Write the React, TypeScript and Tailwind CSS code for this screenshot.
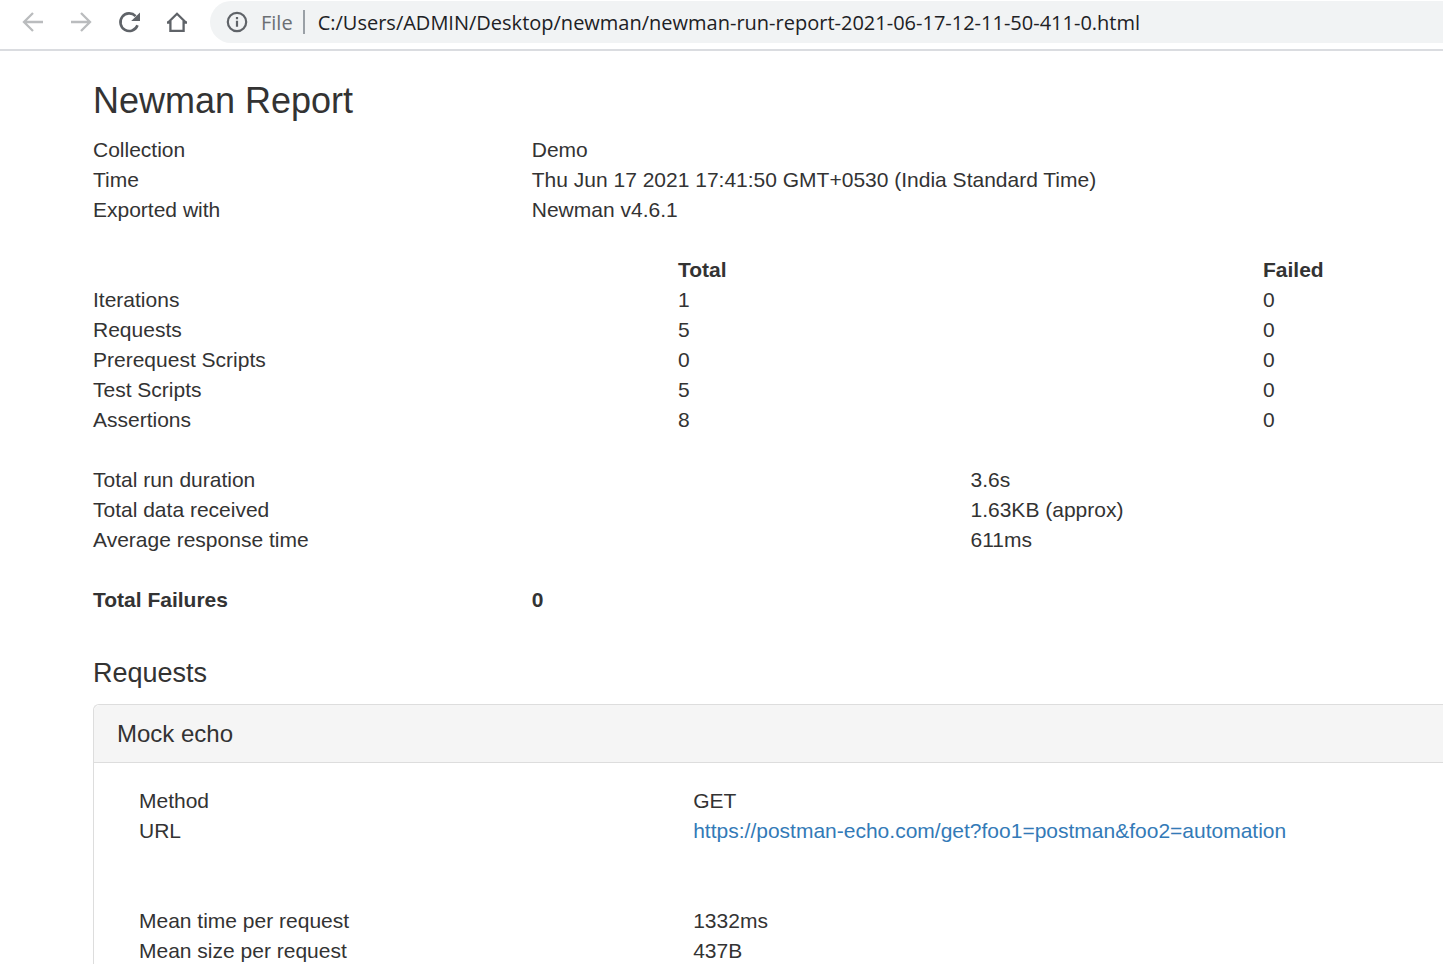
import React from 'react';

interface Entry {
    label: string;
    value: React.ReactNode;
}

const FILE_PATH = 'C:/Users/ADMIN/Desktop/newman/newman-run-report-2021-06-17-12-11-50-411-0.html';
const ECHO_URL = 'https://postman-echo.com/get?foo1=postman&foo2=automation';

const summary: Entry[] = [
    { label: 'Collection', value: 'Demo' },
    { label: 'Time', value: 'Thu Jun 17 2021 17:41:50 GMT+0530 (India Standard Time)' },
    { label: 'Exported with', value: 'Newman v4.6.1' },
];

const stats = [
    { label: 'Iterations', total: 1, failed: 0 },
    { label: 'Requests', total: 5, failed: 0 },
    { label: 'Prerequest Scripts', total: 0, failed: 0 },
    { label: 'Test Scripts', total: 5, failed: 0 },
    { label: 'Assertions', total: 8, failed: 0 },
];

const timings: Entry[] = [
    { label: 'Total run duration', value: '3.6s' },
    { label: 'Total data received', value: '1.63KB (approx)' },
    { label: 'Average response time', value: '611ms' },
];

const requestInfo: Entry[] = [
    { label: 'Method', value: 'GET' },
    { label: 'URL', value: <a href={ECHO_URL} className="text-[#337ab7] hover:underline">{ECHO_URL}</a> },
];

const requestMeans: Entry[] = [
    { label: 'Mean time per request', value: '1332ms' },
    { label: 'Mean size per request', value: '437B' },
];

// Label / value pairs, the columns come from the caller
const EntryList = ({ entries, className }: { entries: Entry[]; className: string }) => (
    <dl className={`grid ${className}`}>
        {entries.map(entry => (
            <React.Fragment key={entry.label}>
                <dt>{entry.label}</dt>
                <dd className="whitespace-nowrap">{entry.value}</dd>
            </React.Fragment>
        ))}
    </dl>
);

const Toolbar = () => (
    <header className="flex shrink-0 items-center border-b-2 border-[#dadce0] bg-white pt-px pb-1.5 pl-[21px]">
        <nav className="flex shrink-0 gap-6 text-[#5f6368]" aria-label="Browser">
            <button type="button" aria-label="Back" disabled className="text-[#babcbe]">
                <svg width="24" height="24" viewBox="0 0 24 24" fill="none" stroke="currentColor" strokeWidth="2.3">
                    <path d="M22 12H3M12 3L3 12l9 9" />
                </svg>
            </button>
            <button type="button" aria-label="Forward" disabled className="text-[#babcbe]">
                <svg width="24" height="24" viewBox="0 0 24 24" fill="none" stroke="currentColor" strokeWidth="2.3">
                    <path d="M2 12h19M12 3l9 9-9 9" />
                </svg>
            </button>
            <button type="button" aria-label="Reload">
                <svg width="24" height="24" viewBox="0 0 24 24" fill="none">
                    <path d="M20.5 15.2A8.8 8.8 0 1 1 18.6 6.1" stroke="currentColor" strokeWidth="2.6" />
                    <path d="M23 2.4v8.6h-8.8z" fill="currentColor" />
                </svg>
            </button>
            <button type="button" aria-label="Home">
                <svg width="24" height="24" viewBox="0 0 24 24" fill="none" stroke="currentColor" strokeWidth="2.3">
                    <path d="M2.6 13L12 3.8l9.4 9.2M5.4 11v9.9h13.2V11M2 12.5h3.4M18.6 12.5h3.4" />
                </svg>
            </button>
        </nav>
        <label className="ml-[21px] flex h-[42px] min-w-0 flex-1 items-center rounded-l-full bg-[#f1f3f4] pl-[15px] font-['Open_Sans',sans-serif] text-xl">
            <svg width="24" height="24" viewBox="0 0 24 24" fill="none" stroke="#5f6368" strokeWidth="2.2" className="shrink-0">
                <circle cx="12" cy="12" r="9.2" />
                <path d="M12 10.8v6M12 7v2.2" />
            </svg>
            <span className="ml-3 pt-0.5 text-[#6b6f73]">File</span>
            <span className="ml-2.5 h-6 w-0.5 shrink-0 bg-[#9aa0a6]" />
            <input
                type="text"
                aria-label="Address"
                defaultValue={FILE_PATH}
                spellCheck={false}
                className="ml-[13px] min-w-0 flex-1 bg-transparent pt-0.5 text-[#202124] outline-none"
            />
        </label>
    </header>
);

const StatsTable = () => (
    <table className="w-full table-fixed text-left">
        <thead>
            <tr>
                <td className="w-13/30 p-0" />
                <th className="w-13/30 p-0 font-bold">Total</th>
                <th className="p-0 font-bold">Failed</th>
            </tr>
        </thead>
        <tbody>
            {stats.map(row => (
                <tr key={row.label}>
                    <th className="p-0 font-normal">{row.label}</th>
                    <td className="p-0">{row.total}</td>
                    <td className="p-0">{row.failed}</td>
                </tr>
            ))}
        </tbody>
    </table>
);

const App: React.FC = () => (
    <div className="flex h-screen flex-col overflow-hidden bg-white">
        <Toolbar />
        <main className="min-h-0 flex-1 overflow-hidden pt-[30px] pl-[93px] font-['Liberation_Sans',Arial,sans-serif] text-[21px] leading-[30px] text-[#333333]">
            <h1 className="mb-3.5 text-4xl leading-10">Newman Report</h1>

            <div className="flex flex-col gap-[30px]">
                <EntryList entries={summary} className="grid-cols-[13fr_27fr]" />
                <StatsTable />
                <EntryList entries={timings} className="grid-cols-[13fr_7fr]" />
                <EntryList entries={[{ label: 'Total Failures', value: 0 }]} className="grid-cols-[13fr_27fr] font-bold" />
            </div>

            <h2 className="mt-[43px] mb-4 text-[27px] leading-[30px]">Requests</h2>

            <section className="rounded-tl-md border-t border-l border-[#dddddd]">
                <h3 className="rounded-tl-md border-b border-[#dddddd] bg-[#f5f5f5] px-[23px] py-[14px] text-2xl leading-[29px]">
                    Mock echo
                </h3>
                <div className="flex flex-col gap-[60px] pt-[23px] pb-6 pl-[45px]">
                    <EntryList entries={requestInfo} className="grid-cols-[17fr_23fr]" />
                    <EntryList entries={requestMeans} className="grid-cols-[17fr_23fr]" />
                </div>
            </section>
        </main>
    </div>
);

export default App;
